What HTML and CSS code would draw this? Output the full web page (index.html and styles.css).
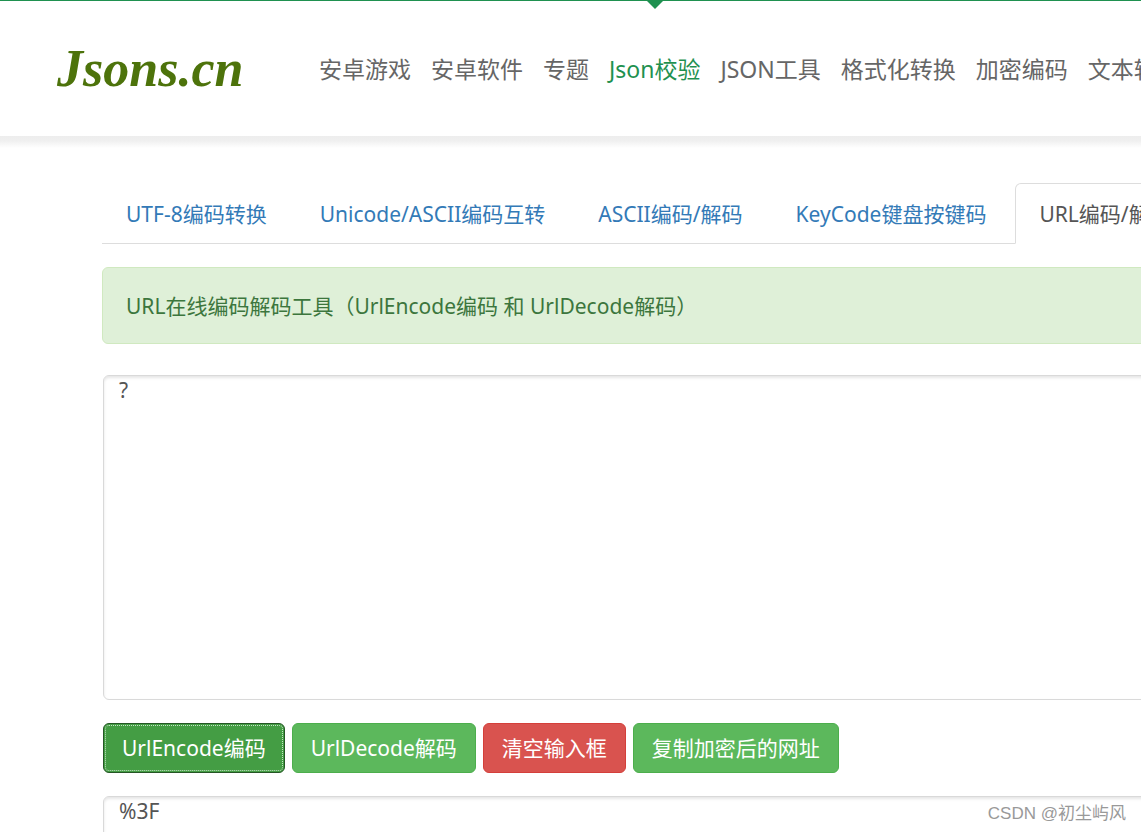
FILE: index.html
```
<!DOCTYPE html>
<html lang="zh-CN">
<head>
<meta charset="utf-8">
<title>URL在线编码解码工具</title>
<link rel="stylesheet" href="styles.css">
</head>
<body>
<header class="header">
  <a class="logo" href="#">Jsons.cn</a>
  <nav class="nav">
    <a class="nav-link" href="#">安卓游戏</a>
    <a class="nav-link" href="#">安卓软件</a>
    <a class="nav-link" href="#">专题</a>
    <a class="nav-link nav-link-active" href="#">Json校验</a>
    <a class="nav-link" href="#">JSON工具</a>
    <a class="nav-link" href="#">格式化转换</a>
    <a class="nav-link" href="#">加密编码</a>
    <a class="nav-link" href="#">文本转换</a>
  </nav>
</header>
<main class="content">
  <nav class="tabs">
    <a class="tab" href="#">UTF-8编码转换</a>
    <a class="tab" href="#">Unicode/ASCII编码互转</a>
    <a class="tab" href="#">ASCII编码/解码</a>
    <a class="tab" href="#">KeyCode键盘按键码</a>
    <a class="tab tab-active" href="#">URL编码/解码</a>
  </nav>
  <p class="notice">URL在线编码解码工具（UrlEncode编码 和 UrlDecode解码）</p>
  <form class="form">
    <textarea class="box" aria-label="输入">?</textarea>
    <div class="actions">
      <button class="btn btn-pressed" type="button">UrlEncode编码</button>
      <button class="btn" type="button">UrlDecode解码</button>
      <button class="btn btn-danger" type="button">清空输入框</button>
      <button class="btn" type="button">复制加密后的网址</button>
    </div>
    <textarea class="box" aria-label="结果">%3F</textarea>
  </form>
</main>
<div class="watermark">CSDN @初尘屿风</div>
</body>
</html>
```
FILE: styles.css
```
* { box-sizing: border-box; }
html { height: 100%; overflow: hidden; }
body {
  position: relative;
  height: 100%;
  margin: 0;
  overflow: hidden;
  background: #fff;
  color: #555;
  font: 21px/30px "Noto Sans", "Noto Sans CJK SC", sans-serif;
}
a { text-decoration: none; }
.header {
  position: relative;
  display: flex;
  align-items: center;
  height: 136px;
  padding-left: 57px;
  border-top: 1px solid #1f9150;
  white-space: nowrap;
}
.header::after {
  content: "";
  position: absolute;
  top: 100%;
  left: 0;
  right: 0;
  height: 12px;
  background: linear-gradient(#ededed, #f0f0f0 40%, #fff);
}
.logo {
  flex: none;
  width: 262px;
  color: #4d730b;
  font: italic bold 52px/60px "Liberation Serif", serif;
}
.nav { display: flex; gap: 20px; }
.nav-link {
  position: relative;
  flex: none;
  color: #666;
  font-size: 23px;
  line-height: 136px;
}
.nav-link-active { color: #1f9150; }
.nav-link-active::before {
  content: "";
  position: absolute;
  top: 0;
  left: 50%;
  margin-left: -8px;
  border: 8px solid transparent;
  border-top-color: #1f9150;
  border-bottom: 0;
}
.content {
  margin-right: -16px;
  padding: 47px 0 0 102px;
}
.tabs {
  display: flex;
  gap: 5px;
  border-bottom: 1px solid #ddd;
  white-space: nowrap;
}
.tab {
  flex: none;
  margin-bottom: -1px;
  padding: 15px 23px 14px;
  border: 1px solid transparent;
  border-radius: 6px 6px 0 0;
  color: #337ab7;
}
.tab-active {
  border-color: #ddd;
  border-bottom-color: #fff;
  background: #fff;
  color: #555;
}
.notice {
  margin: 23px 0 31px;
  padding: 23px 23px 22px;
  border: 1px solid #d0e9c0;
  border-radius: 6px;
  background: #dff0d8;
  color: #3c763d;
}
.form {
  display: flex;
  flex-direction: column;
  gap: 23px;
  padding-left: 1px;
}
.box {
  width: 100%;
  height: 325px;
  padding: 0 15px;
  border: 1px solid #d9d9d9;
  border-radius: 6px;
  outline: 0;
  box-shadow: inset 0 2px 3px #e6e6e6;
  background: #fff;
  color: #555;
  font: inherit;
  line-height: 28px;
  resize: none;
}
.actions { display: flex; gap: 7px; }
.btn {
  height: 50px;
  padding: 0 18px;
  border: 1px solid #4cae4c;
  border-radius: 6px;
  background: #5cb85c;
  color: #fff;
  font: inherit;
}
.btn-pressed {
  border-color: #255625;
  outline: 1px dotted #c5e3c5;
  outline-offset: -3px;
  background: #449d44;
}
.btn-danger {
  border-color: #d43f3a;
  background: #d9534f;
}
.watermark {
  position: absolute;
  right: 15px;
  bottom: 4px;
  color: #999;
  font: 17px/28px "Liberation Sans", "Noto Sans CJK SC", sans-serif;
}
```
